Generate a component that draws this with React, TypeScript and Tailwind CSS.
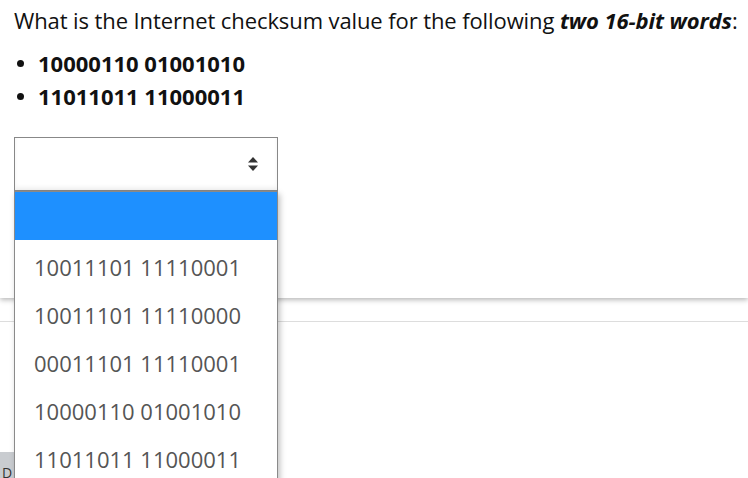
import { useState } from 'react';

const OPTIONS = [
  '10011101 11110001',
  '10011101 11110000',
  '00011101 11110001',
  '10000110 01001010',
  '11011011 11000011',
];

function SortArrows() {
  return (
    <svg width="12" height="16" viewBox="0 0 12 16" aria-hidden="true">
      <path d="M6 1 L11 6.5 L1 6.5 Z" fill="#333" />
      <path d="M6 15 L11 9.5 L1 9.5 Z" fill="#333" />
    </svg>
  );
}

export default function App() {
  const [open] = useState(true);

  return (
    <div
      className="relative h-[478px] w-[748px] overflow-hidden bg-white text-[#111]"
      style={{ fontFamily: '"Open Sans", "Noto Sans", sans-serif' }}
    >
      <section className="h-[298px] bg-white pl-[14px] pt-[3px] shadow-[0_2px_5px_rgba(0,0,0,0.28)]">
        <p className="text-[22px] leading-[34px] tracking-[-0.1px]">
          What is the Internet checksum value for the following{' '}
          <strong className="font-bold italic">two 16-bit words</strong>:
        </p>
        <ul className="mt-[10px] text-[22px] font-bold leading-[33px]">
          {['10000110 01001010', '11011011 11000011'].map((w) => (
            <li key={w} className="flex items-center">
              <span className="ml-[3px] mr-[14px] h-[7px] w-[7px] rounded-full bg-[#111]" />
              {w}
            </li>
          ))}
        </ul>
        <div className="mt-[24px] flex h-[54px] w-[264px] items-center justify-end border border-[#888] bg-white pr-[18px] shadow-[inset_0_-3px_4px_rgba(0,0,0,0.05)]">
          <SortArrows />
        </div>
      </section>

      <div className="mt-[23px] border-t border-[#ddd]" />

      <div className="absolute left-0 top-[452px] h-[30px] w-[14px] bg-[#c9ccd0]">
        <span className="absolute left-[2px] top-[14px] text-[14px] leading-none text-[#333]">D</span>
      </div>

      {open && (
        <div className="absolute left-[14px] top-[191px] w-[264px] border border-[#8a8a8a] bg-white shadow-[2px_3px_6px_rgba(0,0,0,0.25)]">
          <div className="h-[48px] bg-[#1e90ff]" />
          {OPTIONS.map((o) => (
            <div
              key={o}
              className="flex h-[48px] items-center pl-[19px] pt-[6px] text-[22px] text-[#555]"
            >
              {o}
            </div>
          ))}
        </div>
      )}
    </div>
  );
}
